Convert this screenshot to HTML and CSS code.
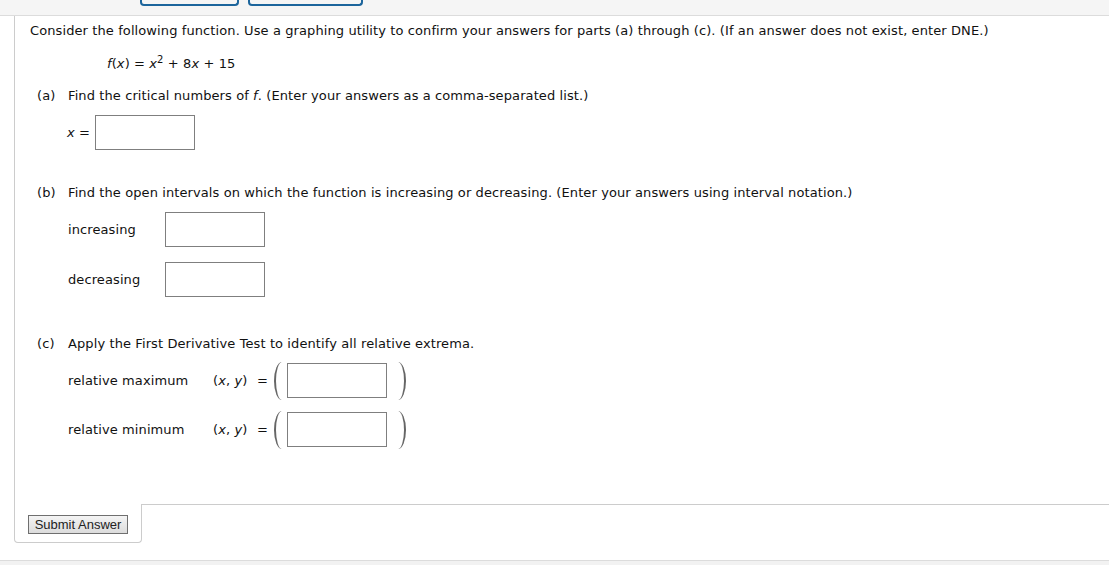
FILE: index.html
```html
<!DOCTYPE html>
<html lang="en">
<head>
    <meta charset="UTF-8">
    <meta name="viewport" content="width=device-width, initial-scale=1.0">
    <title>Question</title>
    <link rel="stylesheet" href="styles.css">
</head>
<body>
    <div class="top-bar">
        <span class="top-tab first"></span>
        <span class="top-tab second"></span>
    </div>

    <div class="question">
        <p class="intro">Consider the following function. Use a graphing utility to confirm your answers for parts (a) through (c). (If an answer does not exist, enter DNE.)</p>
        <p class="formula"><i>f</i>(<i>x</i>) = <i>x</i><sup>2</sup> + 8<i>x</i> + 15</p>

        <div class="part part-a">
            <span class="part-label">(a)</span>
            <span>Find the critical numbers of <i>f</i>. (Enter your answers as a comma-separated list.)</span>
        </div>
        <div class="answer-row row-x">
            <span class="var-label"><i>x</i> =</span>
            <input type="text" class="answer-box">
        </div>

        <div class="part part-b">
            <span class="part-label">(b)</span>
            <span>Find the open intervals on which the function is increasing or decreasing. (Enter your answers using interval notation.)</span>
        </div>
        <div class="answer-row row-inc">
            <span class="row-label short">increasing</span>
            <input type="text" class="answer-box">
        </div>
        <div class="answer-row row-dec">
            <span class="row-label short">decreasing</span>
            <input type="text" class="answer-box">
        </div>

        <div class="part part-c">
            <span class="part-label">(c)</span>
            <span>Apply the First Derivative Test to identify all relative extrema.</span>
        </div>
        <div class="answer-row row-max">
            <span class="row-label long">relative maximum</span>
            <span class="point-label">(<i>x</i>, <i>y</i>)</span>
            <span class="equals">=</span>
            <span class="paren left"></span>
            <input type="text" class="answer-box">
            <span class="paren right"></span>
        </div>
        <div class="answer-row row-min">
            <span class="row-label long">relative minimum</span>
            <span class="point-label">(<i>x</i>, <i>y</i>)</span>
            <span class="equals">=</span>
            <span class="paren left"></span>
            <input type="text" class="answer-box">
            <span class="paren right"></span>
        </div>
    </div>

    <div class="footer">
        <div class="submit-tab">
            <button type="button" class="submit-button">Submit Answer</button>
        </div>
        <div class="footer-fill"></div>
    </div>

    <div class="bottom-bar"></div>
</body>
</html>
```

FILE: styles.css
```css
body {
    margin: 0;
    font-family: "DejaVu Sans", Verdana, sans-serif;
    font-size: 13px;
    line-height: 16px;
    letter-spacing: 0.1px;
    color: #111;
    background: #fff;
}

p {
    margin: 0;
}

.top-bar {
    height: 15px;
    background: #f5f5f5;
    border-bottom: 1px solid #dcdcdc;
    display: flex;
    gap: 9px;
    padding-left: 140px;
}

.top-tab {
    display: block;
    height: 4px;
    border: 2px solid #1c659c;
    border-top: none;
    border-radius: 0 0 4px 4px;
}

.top-tab.first {
    width: 95px;
}

.top-tab.second {
    width: 111px;
}

.question {
    margin-left: 14px;
    border-left: 1px solid #cccccc;
    padding: 7px 0 57px 15px;
}

.formula {
    margin-top: 17px;
    padding-left: 77px;
}

.formula sup {
    font-size: 10px;
    line-height: 0;
}

.part {
    display: flex;
}

.part-label {
    width: 38px;
    padding-left: 7px;
    box-sizing: border-box;
    flex-shrink: 0;
}

.part-a {
    margin-top: 16px;
}

.part-b {
    margin-top: 35px;
}

.part-c {
    margin-top: 39px;
}

.answer-row {
    display: flex;
    align-items: center;
    padding-left: 38px;
    margin-top: 11px;
}

.row-dec {
    margin-top: 15px;
}

.row-min {
    margin-top: 14px;
}

.var-label {
    width: 28px;
    margin-left: -1px;
}

.answer-box {
    width: 100px;
    height: 35px;
    box-sizing: border-box;
    border: 1px solid #7f7f7f;
    margin: 0;
    padding: 0 4px;
    font: inherit;
}

.row-label.short {
    width: 97px;
}

.row-label.long {
    width: 145px;
}

.point-label {
    width: 44px;
}

.equals {
    width: 17px;
}

.paren {
    display: block;
    align-self: flex-start;
    width: 8px;
    height: 38px;
    margin-top: -1px;
    margin-bottom: -3px;
    box-sizing: border-box;
}

.paren.left {
    border-left: 2px solid #666;
    border-radius: 100% 0 0 100% / 50% 0 0 50%;
    margin-right: 5px;
}

.paren.right {
    border-right: 2px solid #666;
    border-radius: 0 100% 100% 0 / 0 50% 50% 0;
    margin-left: 11px;
}

.footer {
    display: flex;
    margin-left: 14px;
}

.submit-tab {
    width: 113px;
    height: 27px;
    border: 1px solid #cccccc;
    border-top: none;
    border-radius: 0 0 4px 4px;
    padding: 11px 0 0 13px;
}

.submit-button {
    display: block;
    width: 100px;
    height: 19px;
    padding: 0;
    font-family: "Liberation Sans", Arial, sans-serif;
    font-size: 13px;
    letter-spacing: 0;
    color: #222;
    background: linear-gradient(#f4f4f4, #dcdcdc);
    border: 1px solid #6f6f6f;
    border-radius: 0;
}

.footer-fill {
    flex: 1;
    border-top: 1px solid #cccccc;
}

.bottom-bar {
    margin-top: 17px;
    height: 4px;
    background: #f2f2f2;
    border-top: 1px solid #dcdcdc;
}
```
